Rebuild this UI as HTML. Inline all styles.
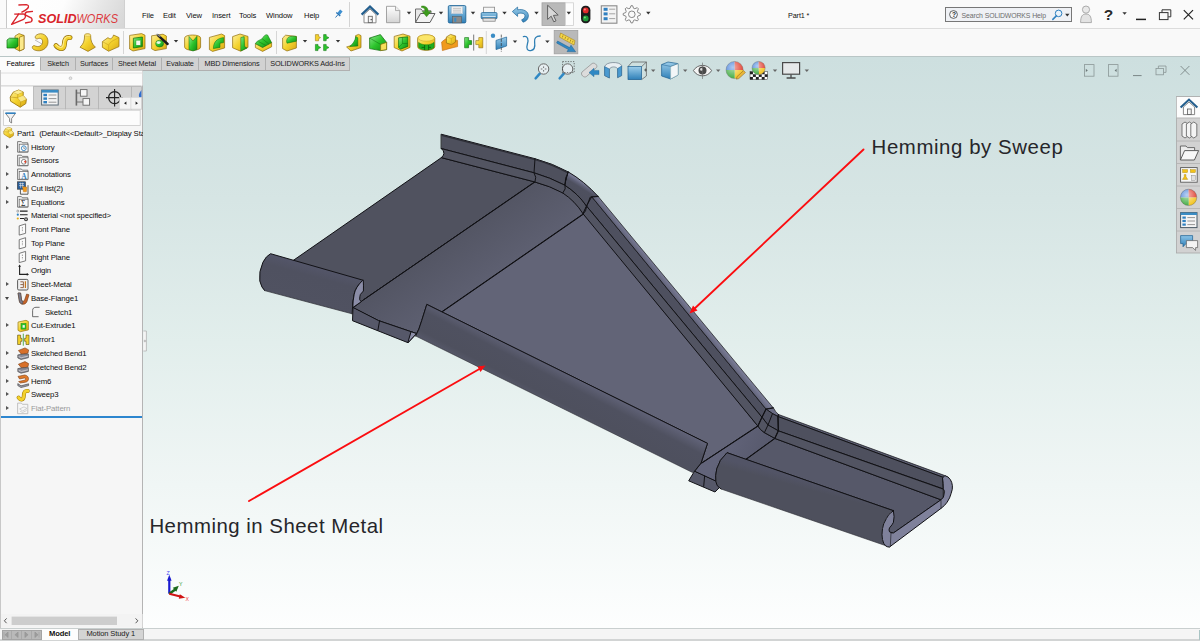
<!DOCTYPE html>
<html><head><meta charset="utf-8"><title>SOLIDWORKS - Part1</title>
<style>
*{box-sizing:border-box;margin:0;padding:0}
html,body{width:1200px;height:641px;overflow:hidden;background:#fff;font-family:"Liberation Sans",sans-serif;color:#111}
.abs{position:absolute}
#titlebar{position:absolute;left:0;top:0;width:1200px;height:29px;background:#fafafa;border-bottom:1px solid #dcdcdc}
#logo{position:absolute;left:6px;top:0;width:119px;height:28px;border-left:1px solid #c8c8c8;border-right:1px solid #d0d0d0;background:linear-gradient(115deg,#ffffff 0%,#fdfdfd 45%,#e6e6e6 75%,#d6d6d6 100%)}
#cmdbar{position:absolute;left:0;top:29px;width:1200px;height:28px;background:#f9f9f9;border-bottom:1px solid #b9c6c6}
.menu{position:absolute;top:10.7px;font-size:7.6px;line-height:9px;color:#0e0e0e;white-space:nowrap;letter-spacing:-0.1px}
#viewport{position:absolute;left:143px;top:57px;width:1057px;height:571px;background:linear-gradient(180deg,#cddfdf 0%,#d6e5e4 25%,#e2eeec 50%,#f0f6f5 75%,#fdfefe 100%)}
#left{position:absolute;left:0;top:70px;width:143px;height:558px;background:#f6f6f6;border-right:1px solid #b4b4b4}
.tab{position:absolute;top:57px;height:13.8px;background:#d2d2d2;border:1px solid #b0b0b0;border-top:1px solid #bdbdbd;font-size:7.3px;line-height:11.6px;text-align:center;color:#222;white-space:nowrap;letter-spacing:-0.1px}
.tab.act{background:#fcfcfc;border-color:#fcfcfc;color:#000}
.row{position:absolute;left:0;width:142.5px;overflow:hidden;height:14px;font-size:7.8px;line-height:14px;white-space:nowrap;color:#0c0c0c;letter-spacing:-0.12px}
.row .tx{position:absolute;left:31px;top:0.5px}
.tri{position:absolute;left:5.6px;top:4.5px;width:0;height:0;border-left:3.5px solid #555;border-top:2.6px solid transparent;border-bottom:2.6px solid transparent}
.trid{position:absolute;left:4.5px;top:5.5px;width:0;height:0;border-top:3.5px solid #444;border-left:2.6px solid transparent;border-right:2.6px solid transparent}
.ann{position:absolute;font-size:20.4px;line-height:24px;color:#26262a;letter-spacing:0.58px;white-space:nowrap;font-weight:400}
</style></head><body>
<div id="titlebar"></div>
<div id="logo"></div>
<div id="cmdbar"></div>
<div id="viewport"></div>
<div id="left"></div>
<div class="menu" style="left:142px">File</div>
<div class="menu" style="left:163px">Edit</div>
<div class="menu" style="left:186px">View</div>
<div class="menu" style="left:212px">Insert</div>
<div class="menu" style="left:239px">Tools</div>
<div class="menu" style="left:266px">Window</div>
<div class="menu" style="left:304px">Help</div>
<div class="menu" style="left:788px;top:10.6px;font-size:7.2px">Part1 *</div>
<div class="abs" style="left:945px;top:7px;width:127px;height:15px;border:1px solid #777;background:#eff1f5"></div>
<div class="menu" style="left:961.6px;top:11.2px;font-size:6.9px;color:#6c6c6c">Search SOLIDWORKS Help</div>
<div class="abs" style="left:349px;top:2px;width:1px;height:25px;background:#d4d4d4"></div>

<div class="tab act" style="left:0px;width:41px">Features</div>
<div class="tab" style="left:40px;width:36px">Sketch</div>
<div class="tab" style="left:75px;width:38px">Surfaces</div>
<div class="tab" style="left:112px;width:50px">Sheet Metal</div>
<div class="tab" style="left:161px;width:38px">Evaluate</div>
<div class="tab" style="left:198px;width:68px">MBD Dimensions</div>
<div class="tab" style="left:265px;width:85px">SOLIDWORKS Add-Ins</div>

<div class="row" style="top:126.0px"><span class="tx" style="left:17px">Part1&nbsp; (Default&lt;&lt;Default&gt;_Display Sta</span></div>
<div class="row" style="top:140.0px"><i class="tri"></i><span class="tx" style="left:31px">History</span></div>
<div class="row" style="top:153.6px"><span class="tx" style="left:31px">Sensors</span></div>
<div class="row" style="top:167.4px"><i class="tri"></i><span class="tx" style="left:31px">Annotations</span></div>
<div class="row" style="top:181.2px"><i class="tri"></i><span class="tx" style="left:31px">Cut list(2)</span></div>
<div class="row" style="top:195.0px"><i class="tri"></i><span class="tx" style="left:31px">Equations</span></div>
<div class="row" style="top:208.7px"><span class="tx" style="left:31px">Material &lt;not specified&gt;</span></div>
<div class="row" style="top:222.5px"><span class="tx" style="left:31px">Front Plane</span></div>
<div class="row" style="top:236.3px"><span class="tx" style="left:31px">Top Plane</span></div>
<div class="row" style="top:250.0px"><span class="tx" style="left:31px">Right Plane</span></div>
<div class="row" style="top:263.8px"><span class="tx" style="left:31px">Origin</span></div>
<div class="row" style="top:277.6px"><i class="tri"></i><span class="tx" style="left:31px">Sheet-Metal</span></div>
<div class="row" style="top:291.4px"><i class="trid"></i><span class="tx" style="left:31px">Base-Flange1</span></div>
<div class="row" style="top:305.1px"><span class="tx" style="left:45px">Sketch1</span></div>
<div class="row" style="top:318.9px"><i class="tri"></i><span class="tx" style="left:31px">Cut-Extrude1</span></div>
<div class="row" style="top:332.7px"><span class="tx" style="left:31px">Mirror1</span></div>
<div class="row" style="top:346.5px"><i class="tri"></i><span class="tx" style="left:31px">Sketched Bend1</span></div>
<div class="row" style="top:360.2px"><i class="tri"></i><span class="tx" style="left:31px">Sketched Bend2</span></div>
<div class="row" style="top:374.0px"><i class="tri"></i><span class="tx" style="left:31px">Hem6</span></div>
<div class="row" style="top:387.8px"><i class="tri"></i><span class="tx" style="left:31px">Sweep3</span></div>
<div class="row" style="top:401.5px"><i class="tri"></i><span class="tx" style="left:31px;color:#9a9a9a">Flat-Pattern</span></div>
<div class="abs" style="left:1px;top:415.5px;width:141px;height:2px;background:#2d86cf"></div>

<!--MODEL-->
<!--MODELSVG--><svg class="abs" style="left:0;top:0" width="1200" height="641" viewBox="0 0 1200 641">
<defs>
<linearGradient id="gMid" gradientUnits="userSpaceOnUse" x1="430" y1="225" x2="490" y2="310"><stop offset="0" stop-color="#4f515e"/><stop offset="1" stop-color="#626477"/></linearGradient>
<linearGradient id="gHemF" gradientUnits="userSpaceOnUse" x1="570" y1="374" x2="553" y2="407"><stop offset="0" stop-color="#606277"/><stop offset="0.3" stop-color="#4f5160"/><stop offset="0.8" stop-color="#4e505e"/><stop offset="1" stop-color="#565869"/></linearGradient>
<linearGradient id="gHemL" gradientUnits="userSpaceOnUse" x1="318" y1="266" x2="308" y2="303"><stop offset="0" stop-color="#54566a"/><stop offset="0.3" stop-color="#4f5160"/><stop offset="1" stop-color="#505261"/></linearGradient>
<linearGradient id="gHem2" gradientUnits="userSpaceOnUse" x1="810" y1="482" x2="800" y2="519"><stop offset="0" stop-color="#525466"/><stop offset="0.2" stop-color="#4e505d"/><stop offset="1" stop-color="#4e505d"/></linearGradient>
<linearGradient id="gNeck" gradientUnits="userSpaceOnUse" x1="725" y1="440" x2="770" y2="462"><stop offset="0" stop-color="#62647a"/><stop offset="1" stop-color="#55576a"/></linearGradient>
<linearGradient id="gLight" gradientUnits="userSpaceOnUse" x1="680" y1="300" x2="685" y2="296"><stop offset="0" stop-color="#5c5e72"/><stop offset="1" stop-color="#7c7e98"/></linearGradient>
<linearGradient id="gLipC" gradientUnits="userSpaceOnUse" x1="576" y1="196" x2="584" y2="183"><stop offset="0" stop-color="#4d4f5d"/><stop offset="0.62" stop-color="#4e505f"/><stop offset="0.8" stop-color="#5e6076"/><stop offset="1" stop-color="#7a7c96"/></linearGradient>
<linearGradient id="gLipD" gradientUnits="userSpaceOnUse" x1="679" y1="306" x2="684.5" y2="301.5"><stop offset="0" stop-color="#595b6f"/><stop offset="1" stop-color="#787a94"/></linearGradient>
<linearGradient id="gLipE" gradientUnits="userSpaceOnUse" x1="766" y1="423" x2="776" y2="411"><stop offset="0" stop-color="#4d4f5d"/><stop offset="0.6" stop-color="#4e505f"/><stop offset="0.8" stop-color="#5c5e73"/><stop offset="1" stop-color="#787a94"/></linearGradient>
<linearGradient id="gLipF" gradientUnits="userSpaceOnUse" x1="860" y1="450" x2="861.5" y2="445.5"><stop offset="0" stop-color="#535567"/><stop offset="1" stop-color="#65677e"/></linearGradient>
</defs>
<g stroke="#121216" stroke-width="1.0" stroke-linejoin="round" stroke-linecap="round">
<!-- left inclined face -->
<path d="M293,260.6 L440,158.6 L441.3,157.6 L535,182 L363.3,300 L353,307.8 L352,296 Z" fill="#50525f"/>
<!-- middle strip -->
<path d="M535,182 Q550,186 563,192.4 Q576,201 583.7,214 L442,312 L426.8,304.4 L421.7,320.7 Q419,330 416.5,333.6 L411.4,331.8 L378.8,320.7 L353,307.8 L363.3,300 Z" fill="url(#gMid)"/>
<!-- main flat -->
<path d="M583.7,214 L600,230 L658.5,305 L720.6,380 L758,426.2 L701,463.5 L707.5,443.4 L442,312 Z" fill="#626477"/>
<!-- neck -->
<path d="M758,426.2 Q760,430 764.4,432.6 L775,438.5 L746,459.5 L727,452.7 Q719,460 716.8,468.7 Q715,476 715.9,481.8 L719.6,487.4 L716.8,481.8 L694.3,471.5 L701,463.5 Z" fill="url(#gNeck)"/>
<!-- lower floor -->
<path d="M775,438.5 L941,499.8 L893.4,533 L888,531.5 L888,527 L893.4,522.4 L893.4,510.7 L746,459.5 Z" fill="#565869"/>
<!-- rear lip face A,B -->
<path d="M441.5,134.3 L535,158.7 Q553,163.5 568.4,172 L565,185.3 Q550,177.5 534,172.8 L441.5,148.6 Z" fill="#4e505d"/>
<path d="M441.5,134.5 L535,158.9 Q553,163.7 568.2,172.2 L567.8,173.6 Q552,165 535,160.3 L441.5,135.9 Z" fill="#2e2f37" stroke="none"/>
<!-- rear fillet A,B,C -->
<path d="M441.5,148.6 L534,172.8 Q550,177.5 565,185.3 Q578,193.5 586.7,206.3 L583.2,214 Q575,201 562.8,193 Q550,186 535,182 L441.3,157.6 Q443.4,156 443.9,153.6 Q444.2,150.8 441.5,148.6 Z" fill="#525461"/>
<!-- lip face C + D (gradient to light outer) -->
<path d="M568.4,172 Q584,181 598.2,196.5 L586.7,206.3 Q578,193.5 565,185.3 Z" fill="url(#gLipC)"/>
<path d="M592,197 L766.2,409.2 L762.1,417.4 L586.7,206.3 Z" fill="#4e505f"/>
<path d="M598.2,196.5 L773.4,408 L766.2,409.2 L592,197 Z" fill="url(#gLipD)" stroke-width="0.7"/>
<!-- sweep diag fillet -->
<path d="M586.7,206.3 L762.1,417.4 L758,426.2 L583.2,214 Z" fill="#525462"/>
<!-- corner pieces -->
<path d="M773.4,408 Q775.5,412 778.5,414.5 L778.2,416.6 L772.5,413.6 L766.2,409.2 Z" fill="#6a6c84" stroke-width="0.7"/>
<path d="M766.2,409.2 L772.5,413.6 L778.2,416.6 L778.5,430.9 L768,425 L762.1,417.4 Z" fill="#4e505f"/>
<path d="M762.1,417.4 L768,425 L778.5,430.9 L775,438.5 L764.4,432.6 Q760,430 758,426.2 Z" fill="#525462"/>
<!-- lower lip -->
<path d="M778.5,414.5 L944.9,475.6 L943.6,477.5 L778.2,416.6 Z" fill="#5c5e72" stroke-width="0.7"/>
<path d="M778.2,416.6 L943.6,477.5 L942.5,478.4 L943.3,488.9 L778.5,430.9 Z" fill="#4e505e"/>
<path d="M778.5,430.9 L943.3,489.2 L943.3,497.4 L941,499.8 L775,438.5 Z" fill="#525462"/>
<!-- dividers -->
<path d="M535,158.7 L534,172.8 Q537,177 535,182 M568.4,172 L565.6,178.2 L565,185.3 Q566.5,188.5 562.8,193 M598.2,196.5 L590.2,197.2 L586.7,206.3 Q586.2,211.5 583.2,214 M773.4,408 L766.2,409.2 L762.1,417.4 Q760,422 758,426.2 M772.5,413.6 L768,425 L764.4,432.6 M778.5,414.5 L778.2,416.6 L778.5,430.9 L775,438.5" fill="none"/>
<!-- left hem -->
<path d="M270.6,253.7 L363.3,280.3 Q357,285 354.7,291.5 Q352.5,300 352.1,313.8 L264.6,290.6 Q261.5,288 259.8,281 Q258.5,272 262.9,262.3 Q266,256 270.6,253.7 Z" fill="url(#gHemL)" stroke="none"/>
<path d="M352.1,313.8 Q352.5,300 354.7,291.5 Q357,285 363.3,280.3 L270.6,253.7 Q266,256 262.9,262.3 Q258.5,272 259.8,281 Q261.5,288 264.6,290.6" fill="none"/>
<path d="M264.6,290.6 L352.1,313.8" fill="none" stroke="#2a2a30" stroke-width="0.7"/>
<path d="M362.4,280.6 Q355.4,287.5 354.2,294.2 Q352.8,301 352.8,307.6 L361.2,301.8 L359.7,299.7 Q359.6,296.5 360.4,294.4 L363.4,291 Q363.6,286 363.3,281 Z" fill="#8b8da7"/>
<!-- tab front -->
<path d="M353,307.8 L352.5,320.7 L408,342.7 L416.5,333.6 L411.4,331.8 L378.8,320.7 Z" fill="#565869"/>
<path d="M411.4,331.8 L416.5,333.6 L408,342.7 Z" fill="#8d8fa9"/>
<path d="M379.6,320.7 L377.9,330.1" fill="none"/>
<!-- front hem -->
<path d="M426.8,304.4 L707.5,443.4 L701,463 L694.3,471.5 L692.5,472.5 L415.7,336 Q419,330 421.7,320.7 Z" fill="url(#gHemF)" stroke="none"/>
<path d="M694.3,471.5 L701,463 L707.5,443.4 L426.8,304.4 L421.7,320.7 Q419,330 415.7,336" fill="none"/>
<path d="M415.7,336 L692.5,472.5" fill="none" stroke="#2a2a30" stroke-width="0.6"/>
<!-- small tab -->
<path d="M694.3,471.5 L688.7,480.8 L715,492 L719.6,487.4 L716.8,481.8 Z" fill="#565869"/>
<path d="M704.6,476 L703.7,486.4" fill="none"/>
<!-- second hem -->
<path d="M727,452.7 L893.4,510.7 Q888,514 886.4,518.5 Q883,524 882.5,528.6 Q881.5,535 882.5,539.6 Q883.5,544 885.6,545.8 Q887.5,547.2 889.5,547 L721,489 Q716,486 715.9,481.8 Q715,476 716.8,468.7 Q719,460 727,452.7 Z" fill="url(#gHem2)" stroke="none"/>
<path d="M893.4,510.7 L727,452.7 Q719,460 716.8,468.7 Q715,476 715.9,481.8 Q716,486 721,489" fill="none"/>
<path d="M721,489 L889.5,547" fill="none" stroke="#2a2a30" stroke-width="0.6"/>
<!-- end cap -->
<path d="M893.4,510.7 Q888,514 886.4,518.5 Q883,524 882.5,528.6 Q881.5,535 882.5,539.6 Q883.5,544 885.6,545.8 Q887.5,547.2 889.5,547 L941,508.4 Q945,505.5 947.2,502.1 Q950,498 951.1,493.5 Q952.8,489 952.4,485.7 Q952,482 950.3,479.5 Q948.5,476.5 944.9,475.6 L942.5,478 Q943.5,483 943.3,488.9 L944.5,491.2 Q944.2,494.5 943.3,497.4 L941,499.8 L893.4,533 Q890,533 889.5,531.8 Q888.5,530 889.5,527.9 Q892.5,524.5 893.4,522.4 Q894.8,517 893.4,510.7 Z" fill="#7f819b"/>
<path d="M891,533.3 L890.3,546.3 M941,499.8 L941,508.4" fill="none" stroke-width="0.6"/>
</g>
<!-- bend lines -->
<g stroke="#121216" stroke-width="1.0" fill="none">
<path d="M535,182 L363.3,300 M583.7,214 L442,312 M758,426.2 L702,463 M775,438.5 L746,459.5"/>
</g>
<!-- arrows -->
<g stroke="#fb0d10" stroke-width="1.85" fill="#fb0d10" stroke-linecap="round">
<path d="M863.5,149.5 L692,311" fill="none"/><path d="M689.5,313.5 L693,305.5 L697.5,310.5 Z" stroke="none"/>
<path d="M249,501 L482,367.5" fill="none"/><path d="M485.5,365.5 L477.5,366.5 L480.5,372 Z" stroke="none"/>
</g>
<!-- triad -->
<g transform="translate(-1.7,-0.3)">
<path d="M171,594 L171,579" stroke="#1a1ad0" stroke-width="2.2"/><path d="M171,575 L168.7,581 L173.3,581 Z" fill="#1a1ad0"/>
<path d="M171,594 L178,589" stroke="#1c6a1c" stroke-width="2.6"/><path d="M180.5,586 L174.5,588 L178,592 Z" fill="#1c6a1c"/>
<path d="M171,594 L183,597" stroke="#d01414" stroke-width="2.2"/><path d="M187,598 L181.5,594.5 L180.5,599 Z" fill="#d01414"/>
<text x="168.3" y="575.2" font-size="5.2" fill="#4a4af4" font-family="Liberation Sans, sans-serif">Z</text>
<text x="180.6" y="586.6" font-size="5.2" fill="#2c9a2c" font-family="Liberation Sans, sans-serif">Y</text>
<text x="187.2" y="601" font-size="5.2" fill="#f44040" font-family="Liberation Sans, sans-serif">X</text>
</g>
</svg>
<!--/MODELSVG-->
<div class="ann" style="left:871.6px;top:134.7px" id="a1">Hemming by Sweep</div>
<div class="ann" style="left:149.4px;top:514.1px;letter-spacing:0.5px" id="a2">Hemming in Sheet Metal</div>

<!--LEFTSVG--><svg class="abs" style="left:0;top:0" width="150" height="641" viewBox="0 0 150 641">
<defs><linearGradient id="yg2" x1="0" y1="0" x2="1" y2="1"><stop offset="0" stop-color="#fdf0a0"/><stop offset="0.5" stop-color="#f4d22c"/><stop offset="1" stop-color="#d8a818"/></linearGradient><linearGradient id="bg2" x1="0" y1="0" x2="0" y2="1"><stop offset="0" stop-color="#8cc4e8"/><stop offset="1" stop-color="#2f80b8"/></linearGradient></defs>
<rect x="0" y="70.6" width="142.5" height="15" fill="#fbfbfb"/>
<path d="M0,73 H142.5" stroke="#dedede" stroke-width="1"/>
<circle cx="70.5" cy="78.2" r="1.4" fill="#e6e6e6" stroke="#a8a8a8" stroke-width="0.5"/>
<path d="M1,86 H141.5" stroke="#c4c4c4" stroke-width="1.2"/>
<rect x="1" y="86.6" width="32.5" height="22.6" fill="#fcfcfc"/>
<rect x="33.5" y="86.6" width="32.0" height="22.4" fill="#d3d3d3" stroke="#b4b4b4" stroke-width="0.8"/>
<rect x="65.5" y="86.6" width="33.0" height="22.4" fill="#d3d3d3" stroke="#b4b4b4" stroke-width="0.8"/>
<rect x="98.5" y="86.6" width="33.0" height="22.4" fill="#d3d3d3" stroke="#b4b4b4" stroke-width="0.8"/>
<rect x="131.5" y="86.6" width="10.0" height="22.4" fill="#d3d3d3" stroke="#b4b4b4" stroke-width="0.8"/>
<g transform="translate(18.2,98.6) scale(1.0)"><path d="M-8,-1.6 L-5,-6.4 L0.5,-8.6 L5,-6.6 L5,-3 L8.2,0.6 L7.6,5 L2,8.6 L-7.6,2.6 Z" fill="url(#yg2)" stroke="#a07a0c" stroke-width="0.9" stroke-linejoin="round"/><path d="M-5,-6.4 L-0.4,-4.4 L5,-6.6 M-0.4,-4.4 L-0.4,-0.8 L5,-3 M-0.4,-0.8 L2.6,3.2 L8.2,0.6 M2.6,3.2 L2,8.6 M-8,-1.6 L-0.4,-0.8" fill="none" stroke="#b8901a" stroke-width="0.6"/><path d="M-5,-6.4 L0.5,-8.6 L5,-6.6 L-0.4,-4.4 Z M-0.4,-0.8 L5,-3 L8.2,0.6 L2.6,3.2 Z" fill="#fdf0a0" stroke="none" opacity="0.8"/></g>
<rect x="41.6" y="90" width="16.6" height="15" fill="#f4f4f4" stroke="#5a6a76" stroke-width="1"/><rect x="41.6" y="90" width="16.6" height="2.6" fill="#3a8cc4"/>
<rect x="43.4" y="93.8" width="3.6" height="2.4" fill="#2f80c0"/><path d="M48.6,95 H56.4" stroke="#8a8a8a" stroke-width="0.9"/>
<rect x="43.4" y="97.39999999999999" width="3.6" height="2.4" fill="#2f80c0"/><path d="M48.6,98.6 H56.4" stroke="#8a8a8a" stroke-width="0.9"/>
<rect x="43.4" y="101.0" width="3.6" height="2.4" fill="#2f80c0"/><path d="M48.6,102.2 H56.4" stroke="#8a8a8a" stroke-width="0.9"/>
<path d="M76.4,89.6 V105.6" stroke="#6a6a6a" stroke-width="1.6"/><path d="M76.4,93 H81 M76.4,102 H83" stroke="#6a6a6a" stroke-width="0.9"/><rect x="80.4" y="89.6" width="6.6" height="6.6" fill="#f6f6f6" stroke="#6a6a6a" stroke-width="0.9"/><rect x="83" y="98.6" width="6.6" height="6.6" fill="#f6f6f6" stroke="#6a6a6a" stroke-width="0.9"/>
<circle cx="114.6" cy="97.6" r="6" fill="none" stroke="#222" stroke-width="1.3"/><path d="M114.6,89 V106.4 M106,97.6 H123" stroke="#222" stroke-width="1.1"/>
<path d="M141.4,90 C139,93 138.2,95.4 139.4,97.6 L141.4,97.6 Z" fill="#2f6fd0"/>
<rect x="119.6" y="97.4" width="11.4" height="11.6" fill="#f4f4f4" stroke="#d0d0d0" stroke-width="0.5"/><rect x="131" y="97.4" width="10.5" height="11.6" fill="#f4f4f4" stroke="#d0d0d0" stroke-width="0.5"/>
<path d="M126.4,101.6 L124,103.2 L126.4,104.8 Z M135.6,101.6 L138,103.2 L135.6,104.8 Z" fill="#222"/>
<rect x="3.6" y="110.2" width="136.6" height="15.2" fill="#fcfcfc" stroke="#cacaca" stroke-width="0.8"/>
<path d="M5.6,113.4 H15.4 L11.6,118.6 V123 L9.6,121.6 V118.6 Z" fill="#f2f2f2" stroke="#6a6a6a" stroke-width="0.8" stroke-linejoin="round"/><path d="M5.4,113.2 H15.6" stroke="#2f80c0" stroke-width="1.6"/>
<path d="M0.5,70 V628" stroke="#c8c8c8" stroke-width="1"/>
<g transform="translate(8.6,132.6) scale(0.62)"><path d="M-8,-1.6 L-5,-6.4 L0.5,-8.6 L5,-6.6 L5,-3 L8.2,0.6 L7.6,5 L2,8.6 L-7.6,2.6 Z" fill="url(#yg2)" stroke="#a07a0c" stroke-width="0.9" stroke-linejoin="round"/><path d="M-5,-6.4 L-0.4,-4.4 L5,-6.6 M-0.4,-4.4 L-0.4,-0.8 L5,-3 M-0.4,-0.8 L2.6,3.2 L8.2,0.6 M2.6,3.2 L2,8.6 M-8,-1.6 L-0.4,-0.8" fill="none" stroke="#b8901a" stroke-width="0.6"/><path d="M-5,-6.4 L0.5,-8.6 L5,-6.6 L-0.4,-4.4 Z M-0.4,-0.8 L5,-3 L8.2,0.6 L2.6,3.2 Z" fill="#fdf0a0" stroke="none" opacity="0.8"/></g>
<path d="M17.6,141.6 H21.4 L22.4,142.8 H27.8 V152.2 H17.6 Z" fill="#f4f4f4" stroke="#5e5e5e" stroke-width="0.8" stroke-linejoin="round"/><rect x="19.2" y="144.2" width="8.8" height="7.6" fill="#fafafa" stroke="#5e5e5e" stroke-width="0.7"/><circle cx="23.8" cy="148.2" r="2.4" fill="none" stroke="#2f80c0" stroke-width="0.9"/><path d="M23.8,146.8 V148.4 H25" stroke="#444" stroke-width="0.5" fill="none"/>
<path d="M17.6,155.2 H21.4 L22.4,156.4 H27.8 V165.79999999999998 H17.6 Z" fill="#f4f4f4" stroke="#5e5e5e" stroke-width="0.8" stroke-linejoin="round"/><rect x="19.2" y="157.79999999999998" width="8.8" height="7.6" fill="#fafafa" stroke="#5e5e5e" stroke-width="0.7"/><circle cx="23.8" cy="161.79999999999998" r="2.4" fill="#fff" stroke="#555" stroke-width="0.7"/><path d="M23.8,161.79999999999998 L25.6,160.2 A2.4,2.4 0 0 1 25.8,163.2 Z" fill="#e0442a"/>
<path d="M17.6,169.0 H21.4 L22.4,170.20000000000002 H27.8 V179.6 H17.6 Z" fill="#f4f4f4" stroke="#5e5e5e" stroke-width="0.8" stroke-linejoin="round"/><rect x="19.2" y="171.6" width="8.8" height="7.6" fill="#fafafa" stroke="#5e5e5e" stroke-width="0.7"/><text x="21.2" y="178.6" font-family="Liberation Serif, serif" font-size="7.4" font-weight="bold" fill="#2f80c0">A</text>
<rect x="17.4" y="181.79999999999998" width="8" height="7.4" fill="#2a5f9a" stroke="#333" stroke-width="0.6"/><path d="M19,183.6 H24 M19,185.6 H24 M20.6,182.6 V187.79999999999998 M22.6,182.6 V187.79999999999998" stroke="#e8e8e8" stroke-width="0.6"/><path d="M20.4,189.2 V194.2 H28 V185.2" fill="none" stroke="#4a4a4a" stroke-width="0.9"/><path d="M22.6,186.6 L27,187.2 L26.4,191.79999999999998 L23.4,191.79999999999998 Z" fill="#f09a1c" stroke="#b86a10" stroke-width="0.4"/>
<path d="M17.6,196.6 H21.4 L22.4,197.8 H27.8 V207.2 H17.6 Z" fill="#f4f4f4" stroke="#5e5e5e" stroke-width="0.8" stroke-linejoin="round"/><rect x="19.2" y="199.2" width="8.8" height="7.6" fill="#fafafa" stroke="#5e5e5e" stroke-width="0.7"/><text x="21" y="206" font-family="Liberation Serif, serif" font-size="7.6" fill="#222">Σ</text>
<path d="M20,211.1 H27.6 M20,214.7 H27.6 M20,218.5 H24" stroke="#222" stroke-width="1.1"/><circle cx="17.8" cy="211.1" r="1" fill="#fff" stroke="#555" stroke-width="0.5"/><circle cx="17.8" cy="214.7" r="1.1" fill="#2f80c0"/><circle cx="17.8" cy="218.5" r="1.1" fill="#e8b01a"/><circle cx="26" cy="219.29999999999998" r="2" fill="#444"/><circle cx="26" cy="219.29999999999998" r="0.8" fill="#eee"/>
<path d="M19.2,225.9 L25.6,223.9 V233.3 L19.2,235.1 Z" fill="#fbfbfb" stroke="#5a5a5a" stroke-width="0.8" stroke-linejoin="round"/><path d="M22.4,227.1 V232.1" stroke="#5a5a5a" stroke-width="0.6" stroke-dasharray="1.4 1"/>
<path d="M19.2,239.70000000000002 L25.6,237.70000000000002 V247.10000000000002 L19.2,248.9 Z" fill="#fbfbfb" stroke="#5a5a5a" stroke-width="0.8" stroke-linejoin="round"/><path d="M22.4,240.9 V245.9" stroke="#5a5a5a" stroke-width="0.6" stroke-dasharray="1.4 1"/>
<path d="M19.2,253.4 L25.6,251.4 V260.8 L19.2,262.6 Z" fill="#fbfbfb" stroke="#5a5a5a" stroke-width="0.8" stroke-linejoin="round"/><path d="M22.4,254.6 V259.6" stroke="#5a5a5a" stroke-width="0.6" stroke-dasharray="1.4 1"/>
<path d="M19.6,265.8 V274.40000000000003 H28" fill="none" stroke="#222" stroke-width="1.1"/><path d="M19.6,264.6 l-1.4,2.2 h2.8 Z M29,274.40000000000003 l-2.2,-1.4 v2.8 Z" fill="#222"/>
<rect x="17.6" y="279.40000000000003" width="10.4" height="10.6" rx="1.2" fill="#f0f0f0" stroke="#4a4a4a" stroke-width="0.9"/><path d="M20.4,281.8 H23.4 V287.6 H20.4 M20.4,284.6 H23.4" fill="none" stroke="#8a5a3a" stroke-width="0.9"/><path d="M25.4,281.20000000000005 V288.0" stroke="#c8761a" stroke-width="1.2"/>
<path d="M18,293.0 L20.6,293.0 L21.6,300.0 C22,301.79999999999995 24,301.79999999999995 24.6,300.0 L26.6,294.0 L29,294.79999999999995 L27,301.4 C25.6,305.2 20.4,305.2 19.4,301.4 Z" fill="#c8642a" stroke="#6a3a1a" stroke-width="0.6"/><path d="M18,293.0 L20.6,293.0 L21.6,300.0 C21.8,301.0 22.6,301.4 23,301.4  L22.6,304.0 C20.8,303.79999999999995 19.8,302.79999999999995 19.4,301.4 Z" fill="#7a7a8a" stroke="#444" stroke-width="0.5"/>
<path d="M38.6,316.70000000000005 H32.6 V310.5 C32.6,308.3 34,307.3 36,307.3 H39.6" fill="none" stroke="#4a4a4a" stroke-width="0.8"/>
<path d="M18,322.09999999999997 L26,320.29999999999995 L28.4,321.5 V329.9 L20.4,331.7 L18,330.29999999999995 Z" fill="url(#yg2)" stroke="#9a7a10" stroke-width="0.7" stroke-linejoin="round"/><rect x="21" y="323.5" width="5" height="5.6" fill="#2cc42c" stroke="#148a14" stroke-width="0.5"/><rect x="22.6" y="325.09999999999997" width="2.2" height="2.6" fill="#f4f4f0"/>
<path d="M17.6,335.09999999999997 H20.6 V338.3 H22 V341.3 H20.6 V344.5 H17.6 Z" fill="#f2d02a" stroke="#5a4a10" stroke-width="0.6"/><path d="M29,335.09999999999997 H26 V338.3 H24.6 V341.3 H26 V344.5 H29 Z" fill="#f2d02a" stroke="#5a4a10" stroke-width="0.6"/><path d="M23.3,333.7 V345.7" stroke="#2a9a2a" stroke-width="0.8"/>
<path d="M18.4,350.5 L25,347.9 L28.6,349.9 L28,353.1 L22,354.9 Z" fill="#d8702a" stroke="#7a3a10" stroke-width="0.6" stroke-linejoin="round"/><path d="M17.8,354.9 L22,354.1 L28.4,353.9 L28.4,357.7 L21,359.5 L17.8,357.9 Z" fill="#8a8a96" stroke="#3a3a3a" stroke-width="0.6" stroke-linejoin="round"/><path d="M18.6,356.5 L21.4,357.7 L28,356.1" stroke="#eee" stroke-width="0.6" fill="none"/>
<path d="M18.4,364.2 L25,361.59999999999997 L28.6,363.59999999999997 L28,366.8 L22,368.59999999999997 Z" fill="#d8702a" stroke="#7a3a10" stroke-width="0.6" stroke-linejoin="round"/><path d="M17.8,368.59999999999997 L22,367.8 L28.4,367.59999999999997 L28.4,371.4 L21,373.2 L17.8,371.59999999999997 Z" fill="#8a8a96" stroke="#3a3a3a" stroke-width="0.6" stroke-linejoin="round"/><path d="M18.6,370.2 L21.4,371.4 L28,369.8" stroke="#eee" stroke-width="0.6" fill="none"/>
<path d="M18,376.4 L24.6,375 C29.6,375.4 29.8,381.6 25.4,382.2 L20.4,383 L18.6,381.6 L24.4,380.2 C26.2,379.6 26,377.8 24.2,378 L19.6,379 Z" fill="#e07a2a" stroke="#7a3a10" stroke-width="0.6" stroke-linejoin="round"/><path d="M17.8,383.6 L21,385.8 L28.6,383.8 L28.6,385.6 L21,387.6 L17.8,385.6 Z" fill="#9a9aa6" stroke="#3a3a3a" stroke-width="0.6" stroke-linejoin="round"/>
<path d="M18.6,397.6 C21,400.8 23.6,400.0 23.8,395.8 C24,391.8 25,390.6 27.8,391.0" fill="none" stroke="#a8820e" stroke-width="4" stroke-linecap="round"/><path d="M18.6,397.6 C21,400.8 23.6,400.0 23.8,395.8 C24,391.8 25,390.6 27.8,391.0" fill="none" stroke="#f4d22c" stroke-width="2.8" stroke-linecap="round"/>
<path d="M17.6,403.1 H21.4 L22.4,404.3 H27.8 V413.7 H17.6 Z" fill="#f6f6f6" stroke="#b4b4b4" stroke-width="0.8" stroke-linejoin="round"/><path d="M19.6,408.9 L24,406.9 L27,408.5 L22.6,410.9 Z M20,411.1 L22.6,412.5 L26.6,410.5" fill="none" stroke="#c0c0c0" stroke-width="0.7"/>
<rect x="1" y="614" width="141.5" height="13.6" fill="#f3f3f3"/>
<rect x="11.6" y="616.6" width="105.4" height="8.4" fill="#cdcdcd"/>
<path d="M6.6,618.4 L4.4,620.8 L6.6,623.2 M135.6,618.4 L137.8,620.8 L135.6,623.2" fill="none" stroke="#444" stroke-width="0.9"/>
</svg><!--/LEFTSVG-->
<!--ICONS-->
<!--ICONSVG--><svg class="abs" style="left:0;top:0" width="1200" height="86" viewBox="0 0 1200 86">
<defs><linearGradient id="yg" x1="0" y1="0" x2="1" y2="1"><stop offset="0" stop-color="#fdf0a0"/><stop offset="0.5" stop-color="#f4d22c"/><stop offset="1" stop-color="#d8a818"/></linearGradient><linearGradient id="gg" x1="0" y1="0" x2="1" y2="1"><stop offset="0" stop-color="#8be88b"/><stop offset="0.5" stop-color="#2cc42c"/><stop offset="1" stop-color="#128a12"/></linearGradient><linearGradient id="bg" x1="0" y1="0" x2="0" y2="1"><stop offset="0" stop-color="#9ccdea"/><stop offset="1" stop-color="#2f80b8"/></linearGradient><linearGradient id="grg" x1="0" y1="0" x2="0" y2="1"><stop offset="0" stop-color="#ffffff"/><stop offset="1" stop-color="#d4d4d4"/></linearGradient><radialGradient id="ball" cx="0.4" cy="0.35" r="0.7"><stop offset="0" stop-color="#fff" stop-opacity="0.6"/><stop offset="1" stop-color="#fff" stop-opacity="0"/></radialGradient></defs>
<g fill="none" stroke="#d9242b" stroke-width="1.35" stroke-linejoin="round" stroke-linecap="butt">
<path d="M18.4,5 L26.3,4.6 Q28.8,5 28.4,7 Q27.8,9.4 21.4,12.3"/>
<path d="M19.2,13.4 L11.6,24.4 L23.6,19.4 Q25.4,18.2 25.5,16.2 Q25.4,14 23,13.8 L14.2,14.2"/>
<path d="M33,11.4 L27,12 Q24.8,12.6 25.2,14.8 L31.6,18.2 Q32.8,20.4 31,21.8 L25,23"/>
</g>
<text x="38" y="23.2" font-family="Liberation Sans, sans-serif" font-size="13.3" font-weight="bold" font-style="italic" fill="#d9242b" textLength="38.5" lengthAdjust="spacingAndGlyphs">SOLID</text>
<text x="76.5" y="23.2" font-family="Liberation Sans, sans-serif" font-size="13.3" font-style="italic" fill="#dc3a40" textLength="41.5" lengthAdjust="spacingAndGlyphs">WORKS</text>
<g transform="translate(338.5,14) rotate(40)"><rect x="-1.6" y="-4.5" width="3.2" height="4.4" fill="#3d8fd0"/><rect x="-2.6" y="-0.3" width="5.2" height="1.3" fill="#2a74b4"/><path d="M0,1 L0,4.6" stroke="#2a74b4" stroke-width="0.9"/></g>
<g><path d="M364,14.5 L364,22.8 L376,22.8 L376,14.5 L370,9 Z" fill="#fdfdfd" stroke="#8a8a8a" stroke-width="1"/><path d="M361.6,14.6 L370,6.6 L378.4,14.6" fill="none" stroke="#245f8e" stroke-width="2.2" stroke-linejoin="miter"/><rect x="368.3" y="16.3" width="4" height="6.3" fill="#f4f4f4" stroke="#6a6a6a" stroke-width="0.9"/><rect x="370.6" y="19" width="1.2" height="1.2" fill="#444"/></g>
<path d="M386.5,6.3 L395.5,6.3 L399.8,10.6 L399.8,22.7 L386.5,22.7 Z" fill="url(#grg)" stroke="#9a9a9a" stroke-width="0.9"/><path d="M395.5,6.3 L395.5,10.6 L399.8,10.6" fill="#eee" stroke="#9a9a9a" stroke-width="0.8"/>
<path d="M406.8,11.8 L411.2,11.8 L409,14.4 Z" fill="#333"/>
<path d="M415.5,22.5 L415.5,9 L421,9 L422.5,10.8 L431,10.8 L431,13.5" fill="#e8e8e8" stroke="#6e6e6e" stroke-width="1"/><path d="M415.5,22.5 L420.5,13.5 L435,13.5 L430,22.5 Z" fill="#f2f2f2" stroke="#5e5e5e" stroke-width="1"/><path d="M421.5,6 C426,5.5 428.3,8 428.2,11.5 L431,11.5 L426.6,16.8 L422.2,11.5 L425,11.5 C425,9 424,7.6 421.5,7.6 Z" fill="#3c9a1c" stroke="#2a7a10" stroke-width="0.4"/>
<path d="M438.8,11.8 L443.2,11.8 L441,14.4 Z" fill="#333"/>
<rect x="448.3" y="5.6" width="17.5" height="17.3" rx="1.2" fill="url(#bg)" stroke="#1f6496" stroke-width="0.9"/><rect x="451.3" y="6.2" width="11.5" height="7.6" fill="#f1f1f1" stroke="#9ab" stroke-width="0.4"/><path d="M453,8.4 H461 M453,10.2 H461 M453,12 H461" stroke="#aaa" stroke-width="0.6"/><rect x="452.6" y="16.6" width="9" height="6.3" fill="#8a8a8a" stroke="#555" stroke-width="0.5"/><rect x="454.3" y="17.8" width="2" height="4" fill="#3a8cc4"/>
<path d="M470.8,11.8 L475.2,11.8 L473,14.4 Z" fill="#333"/>
<rect x="483.6" y="7.2" width="11" height="6" fill="#f6f6f6" stroke="#8a8a8a" stroke-width="0.8"/><rect x="481.2" y="12.6" width="15.8" height="6.2" rx="1" fill="url(#bg)" stroke="#1f6496" stroke-width="0.8"/><rect x="483" y="18.2" width="12.2" height="3" fill="#e4e4e4" stroke="#777" stroke-width="0.7"/><path d="M482.5,16.4 H495.7" stroke="#fff" stroke-width="0.8"/>
<path d="M502.3,11.8 L506.7,11.8 L504.5,14.4 Z" fill="#333"/>
<path d="M512.3,11.6 L517.6,7 L517.6,9.8 C523.5,8.6 528.6,11.5 528.4,16 C528.2,19.6 525.6,21.6 523,22.2 L521.6,19.8 C523.6,19 525,17.8 525,15.8 C525,13.4 521.6,12.6 517.6,13.6 L517.6,16.4 Z" fill="url(#bg)" stroke="#246a9c" stroke-width="0.7"/>
<path d="M534.3,11.8 L538.7,11.8 L536.5,14.4 Z" fill="#333"/>
<rect x="542" y="2.8" width="23.3" height="22.6" fill="#b9b9b9" stroke="#a2a2a2" stroke-width="0.8"/><rect x="565.3" y="2.8" width="8.2" height="22.6" fill="#fdfdfd" stroke="#cfcfcf" stroke-width="0.8"/><path d="M547.6,5.2 L547.6,19.4 L551.2,16.2 L553.8,21.8 L556,20.8 L553.4,15.4 L558.2,15 Z" fill="#d8d8d8" stroke="#555" stroke-width="0.9" stroke-linejoin="round"/>
<path d="M566.5999999999999,11.8 L571.0,11.8 L568.8,14.4 Z" fill="#333"/>
<rect x="581" y="5.8" width="9.4" height="17.4" rx="4.4" fill="#1c1c1c"/><circle cx="585.7" cy="10.4" r="2.9" fill="#e02a2a"/><circle cx="584.9" cy="9.6" r="1" fill="#f88"/><circle cx="585.7" cy="18.4" r="2.9" fill="#1f9a3a"/><circle cx="584.9" cy="17.6" r="1" fill="#7d7"/>
<rect x="601.3" y="5.8" width="15.6" height="17.4" fill="#f3f3f3" stroke="#8a8a8a" stroke-width="1.1"/>
<rect x="603.6" y="7.799999999999999" width="4" height="3" fill="#2f80c0"/><path d="M609.2,9.2 H615.2" stroke="#9a9a9a" stroke-width="0.9"/>
<rect x="603.6" y="12.4" width="4" height="3" fill="#2f80c0"/><path d="M609.2,13.8 H615.2" stroke="#9a9a9a" stroke-width="0.9"/>
<rect x="603.6" y="17.200000000000003" width="4" height="3" fill="#2f80c0"/><path d="M609.2,18.6 H615.2" stroke="#9a9a9a" stroke-width="0.9"/>
<path d="M640.4,13.5 L640.4,15.1 L637.8,16.1 L637.4,17.3 L638.4,19.8 L637.3,20.9 L634.8,19.9 L633.6,20.3 L632.6,22.9 L631.0,22.9 L630.0,20.3 L628.8,19.9 L626.3,20.9 L625.2,19.8 L626.2,17.3 L625.8,16.1 L623.2,15.1 L623.2,13.5 L625.8,12.5 L626.2,11.3 L625.2,8.8 L626.3,7.7 L628.8,8.7 L630.0,8.3 L631.0,5.7 L632.6,5.7 L633.6,8.3 L634.8,8.7 L637.3,7.7 L638.4,8.8 L637.4,11.3 L637.8,12.5 Z" fill="#fbfbfb" stroke="#7a7a7a" stroke-width="0.9" stroke-linejoin="round"/><circle cx="631.8" cy="14.3" r="3.3" fill="#fafafa" stroke="#7a7a7a" stroke-width="0.9"/>
<path d="M646.0999999999999,11.8 L650.5,11.8 L648.3,14.4 Z" fill="#333"/>
<circle cx="953.5" cy="14.5" r="3.9" fill="#f6f8fb" stroke="#3c3c3c" stroke-width="0.8"/><text x="951.9" y="17" font-family="Liberation Sans, sans-serif" font-size="6.6" font-weight="bold" fill="#2a2a2a">?</text>
<circle cx="1058.6" cy="13.4" r="3.3" fill="#e8f2fb" stroke="#2f80c0" stroke-width="1"/><path d="M1056.3,15.9 L1052.8,19.4" stroke="#2f80c0" stroke-width="1.5" stroke-linecap="round"/>
<path d="M1065.1,13.8 L1069.5,13.8 L1067.3,16.4 Z" fill="#333"/>
<circle cx="1086" cy="9.6" r="3.6" fill="#e9e9e9" stroke="#9a9a9a" stroke-width="0.8"/><path d="M1080.6,22.6 C1080.6,16 1082.6,14 1086,14 C1089.4,14 1091.4,16 1091.4,22.6 Z" fill="#e3e3e3" stroke="#9a9a9a" stroke-width="0.8"/>
<text x="1103.8" y="20" font-family="Liberation Sans, sans-serif" font-size="15.5" font-weight="bold" fill="#2a2a2a">?</text>
<path d="M1122.3999999999999,12.200000000000001 L1126.8,12.200000000000001 L1124.6,14.8 Z" fill="#333"/>
<path d="M1136,19.4 H1146" stroke="#222" stroke-width="1.5"/>
<rect x="1159.4" y="12.6" width="8.6" height="7" fill="#fafafa" stroke="#333" stroke-width="1"/><path d="M1162,12.4 V9.8 H1170.8 V16.8 H1168.2" fill="none" stroke="#333" stroke-width="1"/>
<path d="M1183.8,10.2 L1193,19.4 M1193,10.2 L1183.8,19.4" stroke="#222" stroke-width="1.2"/>
<path d="M15,36 L19,33.6 L24,35.4 L24,49 L19.5,51 L15,48.6 Z" fill="url(#yg)" stroke="#8f6c0c" stroke-width="0.7" stroke-linejoin="round"/>
<path d="M19.5,37.2 L24,35.4 L24,49 L19.5,51 Z" fill="#fbe98a" stroke="#8f6c0c" stroke-width="0.7" stroke-linejoin="round"/>
<path d="M7,40 L9.5,38.2 L18,38.2 L18,46 L15.5,48 L7,48 Z" fill="url(#gg)" stroke="#0c6c0c" stroke-width="0.7" stroke-linejoin="round"/>
<path d="M36.5,35 C42,31.5 48.5,35.5 48,42.5 C47.6,48.6 41,52.6 34.6,50 C31.6,48.8 31.6,45.8 34.2,45.6 C38.6,47.8 42.4,45.8 42.6,42 C42.8,38.8 40.2,37.6 37.6,38.8 C35,39.4 34.4,36.4 36.5,35 Z" fill="url(#yg)" stroke="#8f6c0c" stroke-width="0.7"/><path d="M35,40 L42,44" stroke="#555" stroke-width="0.4"/>
<path d="M56,45.6 C60,50 64,49.6 64.4,44 C64.8,38.6 66,37 70,37.6" fill="none" stroke="#8f6c0c" stroke-width="5" stroke-linecap="round"/><path d="M56,45.6 C60,50 64,49.6 64.4,44 C64.8,38.6 66,37 70,37.6" fill="none" stroke="#f4d22c" stroke-width="3.6" stroke-linecap="round"/><path d="M56.2,44.8 C59.6,48.4 63,48.4 63.4,43.6 C63.8,38.6 65.6,36 69.6,36.6" fill="none" stroke="#fbe98a" stroke-width="1.2" stroke-linecap="round"/>
<path d="M84.6,35.2 C84.6,33.4 90.6,33.4 90.6,35.2 C90.6,41 92,44 95.4,47.2 L88,51.4 L80,47.2 C83.4,44 84.6,41 84.6,35.2 Z" fill="url(#yg)" stroke="#8f6c0c" stroke-width="0.7"/><ellipse cx="87.6" cy="35.2" rx="3" ry="1.2" fill="#fbe98a" stroke="#c8a020" stroke-width="0.4"/>
<path d="M102.4,41.6 L108,37.6 C110,39.6 112,39.2 113.6,35 L119,37.6 L119,46.6 L108.6,51.2 L102.4,47.4 Z" fill="url(#yg)" stroke="#8f6c0c" stroke-width="0.7"/><path d="M102.4,41.6 L108.6,45 L108.6,51.2 M108.6,45 C111,40.6 115,40 119,37.6" fill="none" stroke="#c8a020" stroke-width="0.6"/>
<path d="M123.5,31 V54" stroke="#d6d6d6" stroke-width="1"/>
<path d="M129.6,35.4 L141.6,33.6 L145,35.2 L145,48.6 L133,51 L129.6,49 Z" fill="url(#yg)" stroke="#8f6c0c" stroke-width="0.7" stroke-linejoin="round"/>
<path d="M133.4,38.2 L142.4,37 L142.4,46.6 L133.4,48 Z" fill="url(#gg)" stroke="#0c6c0c" stroke-width="0.7" stroke-linejoin="round"/>
<rect x="136" y="40.2" width="4.6" height="5" fill="#f8f8f0" stroke="#2a9a2a" stroke-width="0.4"/>
<path d="M151.6,35.8 L163,34.2 L166.4,36 L166.4,48.6 L155,50.6 L151.6,48.8 Z" fill="url(#yg)" stroke="#8f6c0c" stroke-width="0.7" stroke-linejoin="round"/>
<ellipse cx="159.6" cy="43.6" rx="4" ry="3.4" fill="url(#gg)" stroke="#0c6c0c" stroke-width="0.5"/><ellipse cx="158.6" cy="42.6" rx="2" ry="1.4" fill="#e8f8e8"/><path d="M158,35.4 L167.6,44" stroke="#1a1a1a" stroke-width="2.4" stroke-linecap="round"/><path d="M156.6,34 L160.4,36.6" stroke="#888" stroke-width="1.4"/>
<path d="M173.8,40.0 L178.2,40.0 L176,42.6 Z" fill="#333"/>
<path d="M184.6,38 C184.6,34 200.6,34 200.6,38 L200.6,47 C200.6,51.4 184.6,51.4 184.6,47 Z" fill="url(#yg)" stroke="#8f6c0c" stroke-width="0.7"/><path d="M189,36.4 L193,41 L197,36.2 L197,49.6 L193,51 L189,49.6 Z" fill="url(#gg)" stroke="#0c6c0c" stroke-width="0.5"/>
<path d="M209.4,37.4 L221.6,34 L224.6,35.6 L224.6,48 L212.6,51.4 L209.4,49.6 Z" fill="url(#yg)" stroke="#8f6c0c" stroke-width="0.7" stroke-linejoin="round"/>
<path d="M213.4,48.6 C213.4,42 217,38.4 223.6,37.6 L223.6,42.6 L220,43.2 L220,47.4 Z" fill="url(#gg)" stroke="#0c6c0c" stroke-width="0.5"/>
<path d="M232.6,36.6 L240,34 L248,36.4 L248,47.4 L240.6,51.2 L232.6,47.8 Z" fill="url(#yg)" stroke="#8f6c0c" stroke-width="0.7" stroke-linejoin="round"/>
<path d="M240.8,37.6 L244.2,36.6 L244.6,46.6 L247,48 L240.8,51 Z" fill="url(#gg)" stroke="#0c6c0c" stroke-width="0.5"/>
<path d="M255.4,43.6 L262.6,47.4 L271.6,42.6 L271.6,46.8 L262.6,51.4 L255.4,47.6 Z" fill="url(#yg)" stroke="#8f6c0c" stroke-width="0.7"/><path d="M255.4,43.6 C257.6,39.6 261,40.4 262.6,38 C264,35.6 266,34 267.6,35 L271.6,42.6 L262.6,47.4 Z" fill="url(#gg)" stroke="#0c6c0c" stroke-width="0.5"/><path d="M258.6,41.6 L266,45.6 M262,38.6 L268.6,43.8" stroke="#0e6e0e" stroke-width="0.5"/>
<path d="M276.5,31 V54" stroke="#d6d6d6" stroke-width="1"/>
<path d="M282.6,38 L285.6,35.2 L296.4,36.4 L296.4,48 L287,51 L282.6,48.6 Z" fill="url(#yg)" stroke="#8f6c0c" stroke-width="0.7" stroke-linejoin="round"/>
<path d="M286.6,41.6 C286.6,36.6 290.6,35.6 296.4,36.6 L296.4,41.2 L287,43.2 Z" fill="url(#gg)" stroke="#0c6c0c" stroke-width="0.5"/>
<path d="M302.8,40.0 L307.2,40.0 L305,42.6 Z" fill="#333"/>
<path d="M315.4,34.6 H318.6 V36.4 L320.6,37.6 L318.6,38.8 V40.8 H315.4 Z" fill="#f4d22c" stroke="#8f6c0c" stroke-width="0.5"/>
<path d="M323.6,34.6 H326.20000000000005 V36.2 L329.0,37.7 L326.20000000000005,39.2 V40.800000000000004 H323.6 Z" fill="#2cc42c" stroke="#0c6c0c" stroke-width="0.5"/>
<path d="M315.4,44.4 H318.0 V46.0 L320.79999999999995,47.5 L318.0,49.0 V50.6 H315.4 Z" fill="#2cc42c" stroke="#0c6c0c" stroke-width="0.5"/>
<path d="M323.6,44.4 H326.20000000000005 V46.0 L329.0,47.5 L326.20000000000005,49.0 V50.6 H323.6 Z" fill="#2cc42c" stroke="#0c6c0c" stroke-width="0.5"/>
<path d="M335.8,40.0 L340.2,40.0 L338,42.6 Z" fill="#333"/>
<path d="M346.6,47 L355.6,44 L355.6,35.6 L358.6,34.4 L361,35.6 L361,47.6 L351,51 Z" fill="url(#yg)" stroke="#8f6c0c" stroke-width="0.7"/><path d="M349.6,46.6 C353,44 355,40.6 355.8,36.6 L357.8,37.8 L357.8,46 Z" fill="url(#gg)" stroke="#0c6c0c" stroke-width="0.5"/>
<path d="M369.6,38 L380.4,34.6 L386.6,42.4 L386.6,49.6 L380.6,50.6 L369.6,48.6 Z" fill="url(#gg)" stroke="#0c6c0c" stroke-width="0.7" stroke-linejoin="round"/>
<path d="M380.6,44.4 L386.6,42.4 L386.6,49.6 L380.6,50.6 Z" fill="#f7df5a" stroke="#8f6c0c" stroke-width="0.7" stroke-linejoin="round"/>
<path d="M369.6,38 L380.6,44.4" stroke="#0e6e0e" stroke-width="0.5"/>
<path d="M394.2,36.4 L403,34 L410,36.2 L410,47.4 L402,51 L394.2,47.6 Z" fill="url(#yg)" stroke="#8f6c0c" stroke-width="0.7" stroke-linejoin="round"/>
<path d="M398.6,37.8 L407.8,36.8 L407.8,46.4 L400.4,49.2 L398.6,47.4 Z" fill="url(#gg)" stroke="#0c6c0c" stroke-width="0.7" stroke-linejoin="round"/>
<path d="M398.6,47.4 L402.6,43.6 L407.8,43.4 M402.6,43.6 L402.6,37.4" stroke="#0e6e0e" stroke-width="0.5" fill="none"/>
<path d="M417.6,38.4 C417.6,33.6 434.8,33.6 434.8,38.4 L434.8,46.6 C434.8,51.6 417.6,51.6 417.6,46.6 Z" fill="url(#yg)" stroke="#8f6c0c" stroke-width="0.7"/><ellipse cx="426.2" cy="38" rx="8.2" ry="3.2" fill="#fbe66a" stroke="#c8a020" stroke-width="0.5"/><path d="M418.6,42.4 C422,45.6 430.6,45.6 434,42.4 L434,47.4 C430.6,50.6 422,50.6 418.6,47.4 Z" fill="#1fae1f" stroke="#0e7a0e" stroke-width="0.5"/><path d="M424.6,45 V50 M428.6,45 V50 M424.6,47.4 H421.6 M428.6,47.4 H431" stroke="#0b5a0b" stroke-width="0.8"/>
<path d="M441.6,42 L446,38.6 L457.6,40.4 L457.6,46.6 L450,48.4 L442.4,50.6 Z" fill="#f09a1c" stroke="#c06a10" stroke-width="0.6"/>
<path d="M446.4,37 L450.6,34.4 L455.6,36 L455.6,42 L451.6,44.6 L446.4,43 Z" fill="url(#yg)" stroke="#8f6c0c" stroke-width="0.7" stroke-linejoin="round"/>
<path d="M446.4,37 L451.4,38.6 L455.6,36 M451.4,38.6 V44.6" stroke="#c8a020" stroke-width="0.5" fill="none"/>
<path d="M464.6,37.6 H468.6 V40.6 H471.6 V44.6 H468.6 V47.8 H464.6 Z" fill="url(#gg)" stroke="#0c6c0c" stroke-width="0.6"/><path d="M482.8,37.6 H478.8 V40.6 H475.8 V44.6 H478.8 V47.8 H482.8 Z" fill="url(#yg)" stroke="#8f6c0c" stroke-width="0.6"/><path d="M473.7,34.6 V50.6" stroke="#555" stroke-width="0.8"/>
<path d="M486.3,31 V54" stroke="#d6d6d6" stroke-width="1"/>
<circle cx="493" cy="35.8" r="2.2" fill="#3a8cc4"/><path d="M496,40.4 L506.6,37 L506.6,46 L496,49.6 Z" fill="url(#bg)" stroke="#1f6496" stroke-width="0.7"/><path d="M501.3,34.6 V52" stroke="#333" stroke-width="0.7" stroke-dasharray="3 1.2"/>
<path d="M512.8,40.4 L517.2,40.4 L515,43.0 Z" fill="#333"/>
<path d="M523.4,36.6 C527.8,35.6 528.8,39.6 527.4,44 C526,48.6 527.4,51.2 530.8,50.6 C534.4,50 535.2,46 534.6,42 C534,38.2 536,36 540.2,36" fill="none" stroke="#2f7fb4" stroke-width="1.3" stroke-linecap="round"/>
<path d="M545.1999999999999,40.4 L549.6,40.4 L547.4,43.0 Z" fill="#333"/>
<rect x="554.2" y="30.4" width="23.6" height="23.4" fill="#b9b9b9" stroke="#a0a0a0" stroke-width="0.8"/>
<path d="M560.6,33 L575,40.6 L574,45 L559.6,37.2 Z" fill="#f4d648" stroke="#a8841a" stroke-width="0.6"/><path d="M563,35.4 l-0.6,2 M565.6,36.8 l-0.6,2 M568.2,38.2 l-0.6,2 M570.8,39.6 l-0.6,2 M573,40.8 l-0.5,1.6" stroke="#7a5a10" stroke-width="0.6"/><path d="M557.6,41 L569.6,47.6 L571,45.2 L575.6,51.8 L567,51.6 L568.4,49.6 L556.6,43 Z" fill="#2f88c4" stroke="#1d5f8f" stroke-width="0.5"/>
<path d="M540.0,73.39999999999999 L535.6,78.39999999999999" stroke="#2f88c4" stroke-width="2.4" stroke-linecap="round"/><circle cx="543.6" cy="69.0" r="5.2" fill="#eaf1f4" fill-opacity="0.85" stroke="#6a6a6a" stroke-width="1"/>
<path d="M543.6,66.4 v1.6 M543.6,71.6 v-1.6 M540.8,69 h1.6 M546.4,69 h-1.6" stroke="#555" stroke-width="0.8"/>
<path d="M564.0,73.39999999999999 L559.6,78.39999999999999" stroke="#2f88c4" stroke-width="2.4" stroke-linecap="round"/><circle cx="567.6" cy="69.0" r="5.2" fill="#eaf1f4" fill-opacity="0.85" stroke="#6a6a6a" stroke-width="1"/>
<rect x="562.6" y="61.6" width="11.6" height="11" fill="none" stroke="#444" stroke-width="0.7" stroke-dasharray="1.3 1.3"/>
<path d="M582,72 L592,63.6 C594,62 598,65 596.6,67.4 L586.6,76.4 C584,78.4 580,74.6 582,72 Z" fill="#dcdcdc" stroke="#8a8a8a" stroke-width="0.7"/><path d="M589,72.6 L594,68.2 L594,70.4 L599,70.4 L599,74.6 L594,74.6 L594,76.8 Z" fill="#2f88c4" stroke="#1d5f8f" stroke-width="0.4"/>
<path d="M604.6,66.6 C606,61.4 619.6,61.4 621.6,65.4 L621.6,75.6 L617.6,77.6 L617.6,68.6 C615.6,66.2 611,66.4 609.4,69 L609.4,78 L604.6,75.6 Z" fill="#e8eef2" stroke="#6a7a86" stroke-width="0.7"/><path d="M604.6,66.6 L609.4,69 L609.4,78 L604.6,75.6 Z M617.6,68.6 L621.6,66 L621.6,75.6 L617.6,77.6 Z" fill="#4a9ad0" stroke="#1d5f8f" stroke-width="0.5"/>
<path d="M632,62 H646.4 V76 M632,62 L628,66.6 M646.4,62 L641.6,66.6 M646.4,76 L641.6,79.6" fill="none" stroke="#555" stroke-width="0.7"/><rect x="628" y="66.6" width="13.6" height="13" fill="url(#bg)" stroke="#1d5f8f" stroke-width="0.7"/><path d="M644,70 h3 M645.5,68.5 v3" stroke="#333" stroke-width="0.6"/>
<path d="M651.0,69.39999999999999 L655.4000000000001,69.39999999999999 L653.2,72.0 Z" fill="#666"/>
<path d="M661.6,64.6 L668,62 L678,63.6 L678,75 L670.6,79 L661.6,76 Z" fill="url(#bg)" stroke="#1d5f8f" stroke-width="0.7"/><path d="M670.6,66.4 L678,63.6 L678,75 L670.6,79 Z" fill="#f2f6f8" stroke="#8aa" stroke-width="0.5"/><path d="M661.6,64.6 L670.6,66.4 L678,63.6" fill="none" stroke="#1d5f8f" stroke-width="0.5"/>
<path d="M683.0,69.39999999999999 L687.4000000000001,69.39999999999999 L685.2,72.0 Z" fill="#666"/>
<path d="M693.4,70.6 C697.6,63.6 707.6,63.6 711.6,70.6 C707.6,77.6 697.6,77.6 693.4,70.6 Z" fill="#f4f4f4" stroke="#5a5a5a" stroke-width="0.9"/><circle cx="702.5" cy="70.6" r="4" fill="#4a4a4a"/><circle cx="701.4" cy="69.4" r="1.3" fill="#ddd"/><path d="M702.5,62.6 V79" stroke="#666" stroke-width="0.6"/>
<path d="M716.0,69.39999999999999 L720.4000000000001,69.39999999999999 L718.2,72.0 Z" fill="#666"/>
<path d="M734.6,70 L726.0,70 A8.6,8.6 0 0 1 734.6,61.4 Z" fill="#3a7ad8"/><path d="M734.6,70 L734.6,61.4 A8.6,8.6 0 0 1 743.2,70 Z" fill="#e03a2a"/><path d="M734.6,70 L743.2,70 A8.6,8.6 0 0 1 734.6,78.6 Z" fill="#f2c21a"/><path d="M734.6,70 L734.6,78.6 A8.6,8.6 0 0 1 726.0,70 Z" fill="#3caa3c"/><circle cx="734.6" cy="70" r="8.6" fill="url(#ball)" stroke="#777" stroke-width="0.4"/>
<path d="M737,76.6 L743.6,70.6 L745.4,72.6 L738.8,78.6 L736.4,79.2 Z" fill="#e8b83a" stroke="#8a5a1a" stroke-width="0.5"/>
<rect x="750" y="71.6" width="17.6" height="8" fill="#fff" stroke="#333" stroke-width="0.5"/>
<rect x="750.00" y="71.60" width="2.93" height="2.67" fill="#222"/>
<rect x="750.00" y="76.94" width="2.93" height="2.67" fill="#222"/>
<rect x="752.93" y="74.27" width="2.93" height="2.67" fill="#222"/>
<rect x="755.86" y="71.60" width="2.93" height="2.67" fill="#222"/>
<rect x="755.86" y="76.94" width="2.93" height="2.67" fill="#222"/>
<rect x="758.79" y="74.27" width="2.93" height="2.67" fill="#222"/>
<rect x="761.72" y="71.60" width="2.93" height="2.67" fill="#222"/>
<rect x="761.72" y="76.94" width="2.93" height="2.67" fill="#222"/>
<rect x="764.65" y="74.27" width="2.93" height="2.67" fill="#222"/>
<path d="M758.6,68 L752.0,68 A6.6,6.6 0 0 1 758.6,61.4 Z" fill="#3a7ad8"/><path d="M758.6,68 L758.6,61.4 A6.6,6.6 0 0 1 765.2,68 Z" fill="#e03a2a"/><path d="M758.6,68 L765.2,68 A6.6,6.6 0 0 1 758.6,74.6 Z" fill="#f2c21a"/><path d="M758.6,68 L758.6,74.6 A6.6,6.6 0 0 1 752.0,68 Z" fill="#3caa3c"/><circle cx="758.6" cy="68" r="6.6" fill="url(#ball)" stroke="#777" stroke-width="0.4"/>
<path d="M772.8,69.39999999999999 L777.2,69.39999999999999 L775,72.0 Z" fill="#666"/>
<rect x="782.6" y="62.6" width="17" height="11.6" fill="#e6e9ea" stroke="#4a4a4a" stroke-width="1.2"/><path d="M791,74.4 V77.4 M786.6,78 H795.6" stroke="#4a4a4a" stroke-width="1.3"/>
<path d="M804.5999999999999,69.39999999999999 L809.0,69.39999999999999 L806.8,72.0 Z" fill="#666"/>
<rect x="1084.4" y="64.6" width="9.6" height="11.6" fill="none" stroke="#8a9696" stroke-width="0.8"/><path d="M1087.8,70.4 l-2,-1.6 v3.2 Z" fill="#6a7676"/>
<rect x="1108.4" y="64.6" width="9.6" height="11.6" fill="none" stroke="#8a9696" stroke-width="0.8"/><path d="M1114.6,70.4 l2,-1.6 v3.2 Z" fill="#6a7676"/>
<path d="M1133,75.6 H1141.6" stroke="#7a8686" stroke-width="1"/>
<rect x="1156" y="68.4" width="7.6" height="6.4" fill="none" stroke="#8a9696" stroke-width="0.8"/><path d="M1158.4,68.2 V66 H1166 V72.4 H1163.8" fill="none" stroke="#8a9696" stroke-width="0.8"/>
<path d="M1180.6,66 L1189.4,74.8 M1189.4,66 L1180.6,74.8" stroke="#7a8686" stroke-width="0.9"/>
</svg><!--/ICONSVG-->
<!--BOTSVG--><div class="abs" style="left:0;top:628px;width:1200px;height:13px;background:#f5f5f5;border-top:1.4px solid #c9cfcf"></div>
<div class="abs" style="left:0;top:639.4px;width:1200px;height:1.6px;background:#d2d4d4"></div>
<div class="abs" style="left:1.5px;top:629.6px;width:40px;height:10px;background:#b9b9b9;border:1px solid #a4a4a4"></div>
<div class="abs" style="left:41.6px;top:629.4px;width:36px;height:10.4px;background:#fdfdfd;font-size:7.6px;line-height:10.6px;font-weight:bold;text-align:center;color:#111;letter-spacing:-0.15px">Model</div>
<div class="abs" style="left:77.6px;top:629.4px;width:66.4px;height:10.4px;background:#d4d4d4;border:1px solid #b0b0b0;font-size:7.5px;line-height:8.8px;text-align:center;color:#222;letter-spacing:-0.1px;white-space:nowrap">Motion Study 1</div>
<div class="abs" style="left:1199px;top:630px;width:1px;height:10px;background:#a9c4c4"></div>
<svg class="abs" style="left:0;top:0" width="1200" height="641" viewBox="0 0 1200 641">
<defs><radialGradient id="ball2" cx="0.4" cy="0.35" r="0.7"><stop offset="0" stop-color="#fff" stop-opacity="0.65"/><stop offset="1" stop-color="#fff" stop-opacity="0"/></radialGradient><linearGradient id="bg3" x1="0" y1="0" x2="0" y2="1"><stop offset="0" stop-color="#8cc4e8"/><stop offset="1" stop-color="#2f80b8"/></linearGradient></defs>
<path d="M8.1,632 L4.9,634.8 L8.1,637.6 Z" fill="#9c9c9c" stroke="#8a8a8a" stroke-width="0.4"/>
<path d="M18.1,632 L14.9,634.8 L18.1,637.6 Z" fill="#9c9c9c" stroke="#8a8a8a" stroke-width="0.4"/>
<path d="M24.9,632 L28.1,634.8 L24.9,637.6 Z" fill="#9c9c9c" stroke="#8a8a8a" stroke-width="0.4"/>
<path d="M34.9,632 L38.1,634.8 L34.9,637.6 Z" fill="#9c9c9c" stroke="#8a8a8a" stroke-width="0.4"/>
<path d="M4,632 V637.6 M39,632 V637.6 M11.5,630 V639.4 M21.5,630 V639.4 M31.5,630 V639.4" stroke="#a2a2a2" stroke-width="0.7"/>
<path d="M143.4,331 H146.4 V351 H143.4" fill="#f4f4f4" stroke="#aaa" stroke-width="0.7"/><circle cx="144.9" cy="341" r="0.9" fill="#ccc" stroke="#999" stroke-width="0.4"/>
<rect x="1176.4" y="96.6" width="24" height="156.4" fill="#d2d2d2" stroke="#a8a8a8" stroke-width="0.8"/>
<rect x="1176.8" y="97" width="23.2" height="20.8" fill="#fcfcfc"/>
<path d="M1176.4,118 H1200" stroke="#b0b0b0" stroke-width="0.8"/>
<path d="M1176.4,141 H1200" stroke="#b0b0b0" stroke-width="0.8"/>
<path d="M1176.4,163.5 H1200" stroke="#b0b0b0" stroke-width="0.8"/>
<path d="M1176.4,186 H1200" stroke="#b0b0b0" stroke-width="0.8"/>
<path d="M1176.4,208.5 H1200" stroke="#b0b0b0" stroke-width="0.8"/>
<path d="M1176.4,231 H1200" stroke="#b0b0b0" stroke-width="0.8"/>
<path d="M1183.4,107 L1183.4,114.6 L1194.6,114.6 L1194.6,107 L1189,102 Z" fill="#fdfdfd" stroke="#7a7a7a" stroke-width="0.9"/><path d="M1180.6,107.4 L1189,99.6 L1197.4,107.4" fill="none" stroke="#245f8e" stroke-width="2.1"/><rect x="1187.6" y="109" width="3.6" height="5.4" fill="#f4f4f4" stroke="#5a5a5a" stroke-width="0.8"/>
<path d="M1182,124.0 L1185,122 L1188,124 L1188,136 L1185,138 L1182,136 Z" fill="#f4f4f4" stroke="#5a5a5a" stroke-width="0.8" stroke-linejoin="round"/>
<path d="M1186.4,124.0 L1189.4,122 L1192.4,124 L1192.4,136 L1189.4,138 L1186.4,136 Z" fill="#f4f4f4" stroke="#5a5a5a" stroke-width="0.8" stroke-linejoin="round"/>
<path d="M1190.8,124.0 L1193.8,122 L1196.8,124 L1196.8,136 L1193.8,138 L1190.8,136 Z" fill="#f4f4f4" stroke="#5a5a5a" stroke-width="0.8" stroke-linejoin="round"/>
<path d="M1180.4,160 V146 H1186 L1187.4,147.6 H1194.6 V150.6" fill="#ececec" stroke="#5e5e5e" stroke-width="0.9"/><path d="M1180.4,160 L1184.6,150.6 H1198.6 L1194.4,160 Z" fill="#f8f8f8" stroke="#4e4e4e" stroke-width="0.9" stroke-linejoin="round"/>
<rect x="1180.6" y="167.6" width="16.6" height="14.6" fill="#f6f6f6" stroke="#5a5a5a" stroke-width="0.9"/><rect x="1182.6" y="169.6" width="5" height="3" fill="#f2c21a" stroke="#a8820e" stroke-width="0.4"/><rect x="1190.4" y="169.6" width="5" height="3" fill="#f2c21a" stroke="#a8820e" stroke-width="0.4"/><path d="M1184.2,174.6 h1.8 v2.2 l1.8,2.6 h-5.4 l1.8,-2.6 Z" fill="#f2c21a" stroke="#a8820e" stroke-width="0.4"/><rect x="1191.6" y="175.4" width="3.6" height="5" fill="#e0e0e0" stroke="#777" stroke-width="0.4"/>
<path d="M1188.6,197.4 L1180.3999999999999,197.4 A8.2,8.2 0 0 1 1188.6,189.20000000000002 Z" fill="#3a7ad8"/><path d="M1188.6,197.4 L1188.6,189.20000000000002 A8.2,8.2 0 0 1 1196.8,197.4 Z" fill="#e03a2a"/><path d="M1188.6,197.4 L1196.8,197.4 A8.2,8.2 0 0 1 1188.6,205.6 Z" fill="#f2c21a"/><path d="M1188.6,197.4 L1188.6,205.6 A8.2,8.2 0 0 1 1180.3999999999999,197.4 Z" fill="#3caa3c"/><circle cx="1188.6" cy="197.4" r="8.2" fill="url(#ball2)" stroke="#666" stroke-width="0.4"/>
<rect x="1180.6" y="212.6" width="16.4" height="15" fill="#f4f4f4" stroke="#4a5a66" stroke-width="1"/><rect x="1180.6" y="212.6" width="16.4" height="2.4" fill="#3a8cc4"/>
<rect x="1182.4" y="216.5" width="3.4" height="2.2" fill="#2f80c0"/><path d="M1187.4,217.6 H1195" stroke="#8a8a8a" stroke-width="0.9"/>
<rect x="1182.4" y="219.9" width="3.4" height="2.2" fill="#2f80c0"/><path d="M1187.4,221 H1195" stroke="#8a8a8a" stroke-width="0.9"/>
<rect x="1182.4" y="223.5" width="3.4" height="2.2" fill="#2f80c0"/><path d="M1187.4,224.6 H1195" stroke="#8a8a8a" stroke-width="0.9"/>
<path d="M1180.6,235.6 H1192.6 V243.6 H1186 L1183,246.8 V243.6 H1180.6 Z" fill="url(#bg3)" stroke="#1d5f8f" stroke-width="0.7" stroke-linejoin="round"/><path d="M1186.4,240.6 H1197.6 V247.6 H1195.6 V250.4 L1192.6,247.6 H1186.4 Z" fill="#f4f4f4" stroke="#5a5a5a" stroke-width="0.7" stroke-linejoin="round"/>
</svg><!--/BOTSVG-->
</body></html>
